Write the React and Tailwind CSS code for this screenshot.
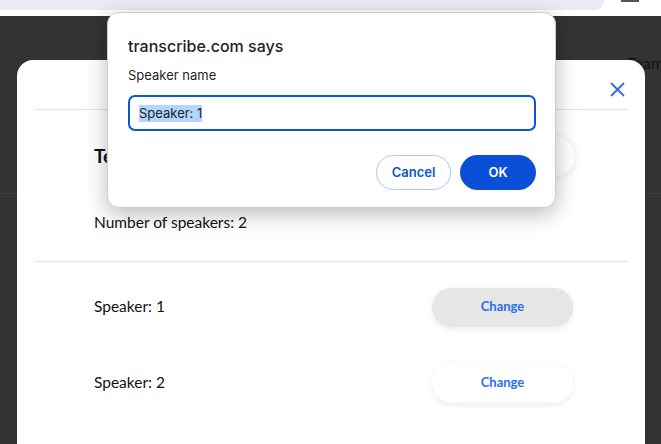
import React from 'react'

const pageFont = { fontFamily: 'Lato, "Noto Sans", sans-serif' }
const dialogFont = { fontFamily: 'Inter, Roboto, "Liberation Sans", sans-serif' }

const SpeakerRow = ({ name, pressed }) => (
  <div className="flex items-center justify-between h-[76px] pl-[60px] pr-[55px]">
    <span className="text-[15.5px] text-[#111]">{name}</span>
    <button
      className={`w-[141px] h-[39px] rounded-full text-[13px] font-bold text-[#2b6cf5] shadow-[0_2px_6px_rgba(60,90,160,0.12)] ${pressed ? 'bg-[#e6e6e6]' : 'bg-white'}`}
    >
      Change
    </button>
  </div>
)

const App = () => {
  return (
    <div className="relative w-[661px] h-[444px] overflow-hidden bg-[#333333]" style={pageFont}>
      {/* browser strip */}
      <div className="h-[16px] bg-white flex">
        <div className="w-[604px] h-[10px] bg-[#e9ecf5] rounded-br-[9px]"></div>
        <div className="ml-[17px] w-[18px] h-[2px] bg-[#555]"></div>
      </div>

      {/* page behind the overlay */}
      <div className="absolute left-[627px] top-[53px] text-[16px] text-[#111] leading-[20px]">Team</div>
      <div className="absolute left-0 right-0 top-[193px] h-px bg-[#3c3c3c]"></div>

      {/* settings modal */}
      <div className="absolute left-[17px] top-[60px] w-[628px] h-[400px] bg-white rounded-t-[16px]">
        <div className="h-[49px] flex items-center justify-end pr-[20px] pt-[10px]">
          <svg width="15" height="15" viewBox="0 0 15 15" fill="none" stroke="#2b6cf5" strokeWidth="1.8" strokeLinecap="round">
            <path d="M1.5 1.5L13.5 13.5M13.5 1.5L1.5 13.5" />
          </svg>
        </div>
        <div className="mx-[17px] h-px bg-[#e3e3e3]"></div>

        <div className="flex items-center justify-between h-[92px] pl-[77px] pr-[70px]">
          <span className="text-[19px] font-bold text-[#111]">Team speakers</span>
          <div className="w-[60px] h-[40px] rounded-full bg-white shadow-[0_1px_8px_rgba(60,90,160,0.15)]"></div>
        </div>
        <div className="pl-[77px] text-[15.5px] text-[#111] leading-[20px] mt-[10px]">Number of speakers: 2</div>
        <div className="mx-[17px] mt-[29px] h-px bg-[#e3e3e3]"></div>

        <div className="pt-[7px] px-[17px]">
          <SpeakerRow name="Speaker: 1" pressed />
          <SpeakerRow name="Speaker: 2" />
        </div>
      </div>

      {/* browser prompt */}
      <div
        className="absolute left-[107px] top-[12px] w-[449px] h-[196px] bg-white rounded-[12px] border border-[#cfcfcf] shadow-[0_6px_22px_rgba(0,0,0,0.28)] pl-[20px] pr-[19px]"
        style={dialogFont}
      >
        <div className="pt-[22px] text-[16px] font-medium text-[#1f1f1f] leading-[22px]">transcribe.com says</div>
        <div className="mt-[10px] text-[13px] text-[#1f1f1f] leading-[16px]">Speaker name</div>
        <div className="mt-[12px] h-[36px] border-2 border-[#0b57d0] rounded-[7px] flex items-center px-[9px]">
          <span className="text-[13px] text-[#1f1f1f] bg-[#b4d5fe] leading-[17px]">Speaker: 1</span>
        </div>
        <div className="mt-[24px] flex justify-end gap-[9px]">
          <button className="w-[75px] h-[35px] rounded-full border border-[#a8c7fa] text-[13px] font-semibold text-[#0b57d0] bg-white">
            Cancel
          </button>
          <button className="w-[76px] h-[35px] rounded-full bg-[#0b4fd9] text-[13px] font-semibold text-white">
            OK
          </button>
        </div>
      </div>
    </div>
  )
}

export default App
